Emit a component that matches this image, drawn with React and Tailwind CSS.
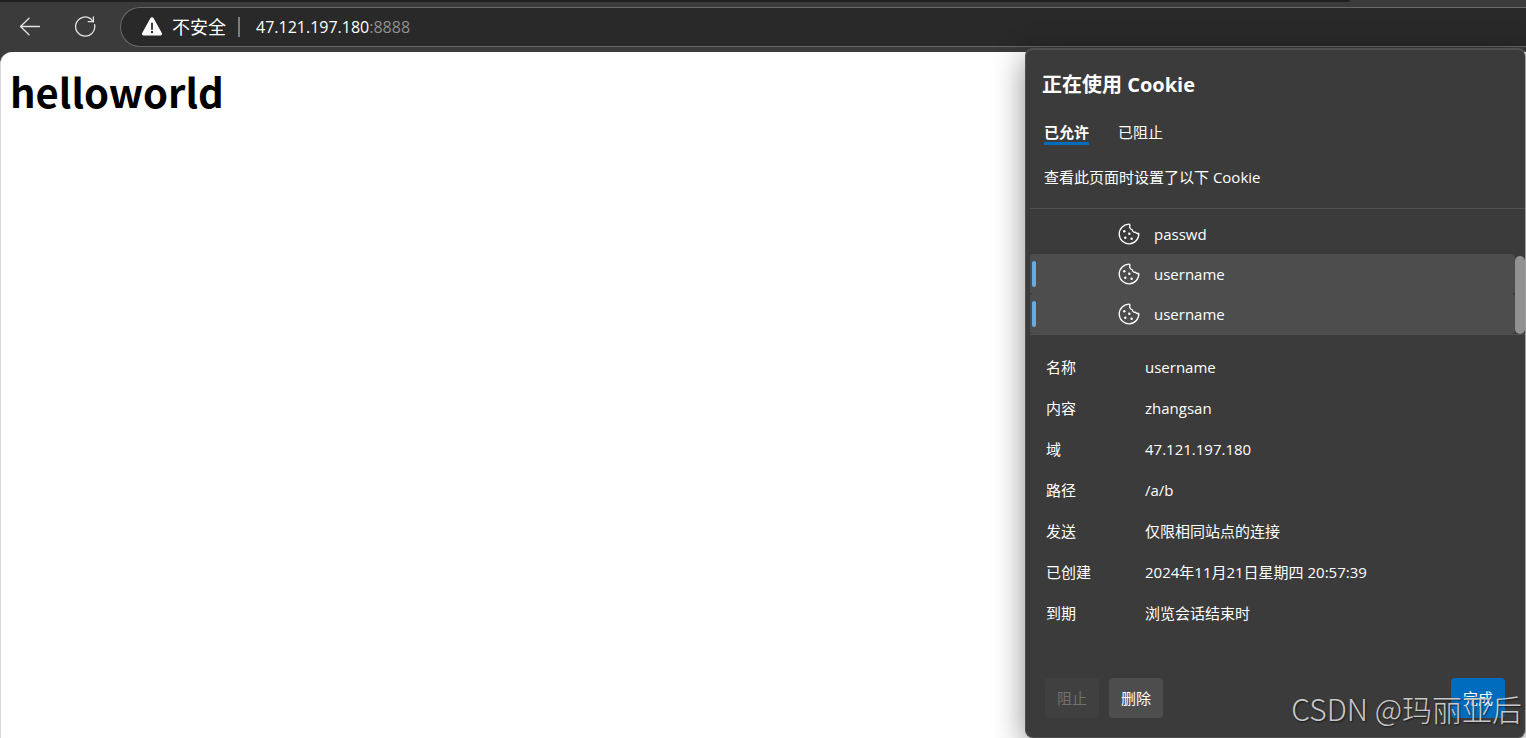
import React from "react";

const cookies = [
  { id: 1, name: "passwd", selected: false },
  { id: 2, name: "username", selected: true },
  { id: 3, name: "username", selected: true },
];

const details = [
  ["名称", "username"],
  ["内容", "zhangsan"],
  ["域", "47.121.197.180"],
  ["路径", "/a/b"],
  ["发送", "仅限相同站点的连接"],
  ["已创建", "2024年11月21日星期四 20:57:39"],
  ["到期", "浏览会话结束时"],
];

function BackIcon() {
  return (
    <svg width="22" height="22" viewBox="0 0 22 22" fill="none" stroke="#e4e4e4" strokeWidth="1.3" strokeLinecap="round" strokeLinejoin="round" aria-hidden="true">
      <path d="M20.5 10.500H1.500M10 2.300L1.500 10.500l8.500 8.200" />
    </svg>
  );
}

function ReloadIcon() {
  return (
    <svg width="22" height="22" viewBox="0 0 22 22" fill="none" stroke="#e4e4e4" strokeWidth="1.3" strokeLinecap="round" strokeLinejoin="round" aria-hidden="true">
      <path d="M20.600 8.700A9.600 9.600 0 1 1 16.500 2.600L19.400 5.700" />
      <path d="M19.400 0.800V5.700H14.200" />
    </svg>
  );
}

function WarningIcon() {
  return (
    <svg width="22" height="20" viewBox="0 0 22 20" aria-hidden="true">
      <path d="M9.500 1.100a1.700 1.700 0 0 1 3 0l8.300 15a1.600 1.600 0 0 1-1.400 2.400H2.600a1.600 1.600 0 0 1-1.400-2.400z" fill="#fff" />
      <path d="M11 6.500v5.500" stroke="#292929" strokeWidth="1.800" strokeLinecap="round" />
      <circle cx="11" cy="15" r="1.200" fill="#292929" />
    </svg>
  );
}

function CookieIcon() {
  return (
    <svg width="22" height="22" viewBox="0 0 22 22" fill="none" aria-hidden="true">
      <path
        d="M11.300 1.200A9.800 9.800 0 1 0 20.800 10.300C19.500 10.700 18 10.200 17.300 9.200C15.800 9.600 14.300 8.400 14.400 6.900C12.500 6.600 11.200 4.600 11.800 1.300Z"
        stroke="#fff"
        strokeWidth="1.300"
        strokeLinejoin="round"
      />
      <g fill="#fff">
        <circle cx="6.300" cy="8.200" r="1.200" />
        <circle cx="11.300" cy="10.800" r="1.200" />
        <circle cx="7.300" cy="14.800" r="1.200" />
        <circle cx="13.600" cy="15.800" r="1.200" />
      </g>
    </svg>
  );
}

function Toolbar() {
  return (
    <header className="bg-[#3b3b3b] pb-[5px]">
      <div className="mr-44 h-0.5 rounded-br-lg bg-[#202020]" />
      <div className="flex items-center pt-[5px]">
        <button type="button" aria-label="返回" className="ml-[19px]">
          <BackIcon />
        </button>
        <button type="button" aria-label="刷新" className="ml-[33px]">
          <ReloadIcon />
        </button>
        <div className="ml-6 flex h-10 flex-1 items-center rounded-l-full border border-r-0 border-[#686868] bg-[#292929] pl-5 text-white">
          <WarningIcon />
          <span className="ml-[9px] text-[18px] leading-6">不安全</span>
          <span className="ml-3 h-5 w-0.5 bg-[#7c7c7c]" />
          <a href="#address" className="ml-4 text-base leading-6">
            47.121.197.180<span className="text-[#909090]">:8888</span>
          </a>
        </div>
      </div>
    </header>
  );
}

function CookieDialog() {
  return (
    <section
      role="dialog"
      aria-labelledby="cookie-title"
      className="absolute top-12 right-0 bottom-0 flex w-[501px] flex-col rounded-lg border border-t-2 border-[#505050] border-r-[#a0a0a0] bg-[#3b3b3b] text-[15px] leading-5 text-white shadow-[0_8px_32px_rgba(0,0,0,0.45)]"
    >
      <div className="pr-4 pl-[18px]">
        <h2 id="cookie-title" className="-ml-0.5 pt-[21px] text-[20px] leading-7 font-bold">正在使用 Cookie</h2>
        <div role="tablist" className="mt-[23px] flex items-start gap-[29px]">
          <button type="button" role="tab" aria-selected="true" className="border-b-[3px] border-[#006cbe] font-bold">已允许</button>
          <button type="button" role="tab" aria-selected="false">已阻止</button>
        </div>
        <p className="mt-[22px] leading-5">查看此页面时设置了以下 Cookie</p>
      </div>

      <div className="mt-[21px] ml-1 flex border-y border-[#505050]">
        <ul className="flex-1 pt-[5px]">
          {cookies.map((c) => (
            <li
              key={c.id}
              className={
                c.selected
                  ? "flex h-10 items-center rounded-sm bg-[#4d4d4d] pl-0.5"
                  : "flex h-10 items-center pl-0.5"
              }
            >
              <span className={c.selected ? "h-[26px] w-1 rounded-sm bg-[#63ace5]" : "w-1"} />
              <span className="ml-[82px]">
                <CookieIcon />
              </span>
              <span className="ml-3.5">{c.name}</span>
            </li>
          ))}
        </ul>
        <div className="flex w-2.5 flex-col justify-end">
          <div className="h-[78px] rounded-full bg-[#919191]" />
        </div>
      </div>

      <table className="mt-[11px] ml-5 w-[calc(100%-36px)] table-fixed text-left">
        <tbody>
          {details.map(([label, value]) => (
            <tr key={label} className="h-[41px]">
              <th scope="row" className="w-[99px] p-0 font-normal">{label}</th>
              <td className="p-0">{value}</td>
            </tr>
          ))}
        </tbody>
      </table>

      <div className="mt-auto flex gap-2.5 pr-5 pb-[19px] pl-[19px]">
        <button type="button" disabled className="h-10 w-[54px] rounded-sm bg-[#404040] text-[#707070]">阻止</button>
        <button type="button" className="h-10 w-[54px] rounded-sm bg-[#4d4d4d]">删除</button>
        <button type="button" className="ml-auto h-10 w-[54px] rounded-sm bg-[#006cbe]">完成</button>
      </div>
    </section>
  );
}

export default function App() {
  return (
    <div
      lang="zh-CN"
      className="relative flex min-h-screen flex-col overflow-hidden bg-[#3b3b3b] font-['Open_Sans','Noto_Sans_CJK_SC',sans-serif]"
    >
      <Toolbar />
      <main className="flex-1 rounded-tl-xl border-l border-[#d8d8d8] bg-white px-[9px] pt-2.5">
        <h1 className="font-['Noto_Sans_CJK_SC',sans-serif] text-[40px] leading-[58px] font-bold text-black">helloworld</h1>
      </main>
      <CookieDialog />
      <div className="pointer-events-none absolute right-1 bottom-2.5 font-['Noto_Sans_CJK_SC',sans-serif] text-[30px] leading-10 font-light text-[#c8c8c8] [text-shadow:1px_1px_2px_rgba(0,0,0,0.6)]">
        CSDN @玛丽亚后
      </div>
    </div>
  );
}
